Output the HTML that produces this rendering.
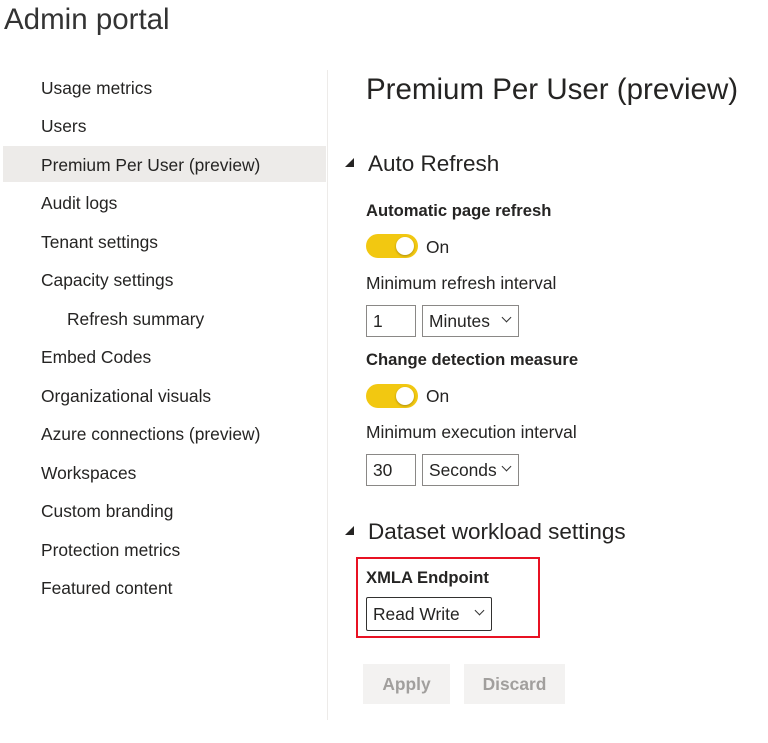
<!DOCTYPE html><html><head><style>
body{margin:0;width:768px;height:743px;background:#fff;font-family:"Liberation Sans",sans-serif;color:#252423;position:relative;overflow:hidden}
.a{position:absolute;white-space:nowrap}
.s{font-size:17.4px;left:41px;line-height:20px}
.t{position:absolute;width:52px;height:24px;border-radius:12px;background:#f2c811;left:366px}
.t:after{content:"";position:absolute;right:4px;top:3px;width:18px;height:18px;border-radius:50%;background:#fff;box-shadow:0 1px 2px rgba(0,0,0,.3)}
.b{position:absolute;border:1px solid #8a8886;height:32px;box-sizing:border-box;font-size:17.4px;line-height:30px;padding-left:6px}
.ch{position:absolute;right:8px;top:8px;width:6px;height:6px;border-right:1.5px solid #333;border-bottom:1.5px solid #333;transform:rotate(45deg)}
.tri{position:absolute;width:0;height:0;border-left:9px solid transparent;border-bottom:9px solid #252423;left:345px}
.btn{position:absolute;top:664px;height:40px;background:#f3f2f1;color:#a19f9d;font-weight:bold;font-size:17.4px;line-height:40px;text-align:center}
.lb{font-size:16.6px;font-weight:bold;left:366px}
</style></head><body>
<div class="a" style="left:4px;top:3px;font-size:29.5px;color:#333">Admin portal</div>
<div class="a" style="left:3px;top:146px;width:323px;height:36px;background:#edebe9"></div>
<div class="a" style="left:327px;top:70px;width:1px;height:650px;background:#edebe9"></div>
<div class="a s" style="top:78px">Usage metrics</div>
<div class="a s" style="top:116px">Users</div>
<div class="a s" style="top:155px">Premium Per User (preview)</div>
<div class="a s" style="top:193px">Audit logs</div>
<div class="a s" style="top:232px">Tenant settings</div>
<div class="a s" style="top:270px">Capacity settings</div>
<div class="a s" style="top:309px;left:67px">Refresh summary</div>
<div class="a s" style="top:347px">Embed Codes</div>
<div class="a s" style="top:386px">Organizational visuals</div>
<div class="a s" style="top:424px">Azure connections (preview)</div>
<div class="a s" style="top:463px">Workspaces</div>
<div class="a s" style="top:501px">Custom branding</div>
<div class="a s" style="top:540px">Protection metrics</div>
<div class="a s" style="top:578px">Featured content</div>
<div class="a" style="left:366px;top:73px;font-size:29.5px;color:#252423">Premium Per User (preview)</div>
<div class="tri" style="top:158px"></div>
<div class="a" style="left:368px;top:151px;font-size:22.5px">Auto Refresh</div>
<div class="a lb" style="top:201px">Automatic page refresh</div>
<div class="t" style="top:234px"></div><div class="a" style="left:426px;top:237px;font-size:17.4px">On</div>
<div class="a" style="left:366px;top:273px;font-size:17.4px">Minimum refresh interval</div>
<div class="b" style="left:366px;top:305px;width:50px">1</div>
<div class="b" style="left:422px;top:305px;width:97px">Minutes<span class="ch"></span></div>
<div class="a lb" style="top:350px">Change detection measure</div>
<div class="t" style="top:384px"></div><div class="a" style="left:426px;top:386px;font-size:17.4px">On</div>
<div class="a" style="left:366px;top:422px;font-size:17.4px">Minimum execution interval</div>
<div class="b" style="left:366px;top:454px;width:50px">30</div>
<div class="b" style="left:422px;top:454px;width:97px">Seconds<span class="ch"></span></div>
<div class="tri" style="top:526px"></div>
<div class="a" style="left:368px;top:519px;font-size:22.5px">Dataset workload settings</div>
<div class="a" style="left:356px;top:557px;width:184px;height:81px;border:2px solid #e81123;box-sizing:border-box"></div>
<div class="a lb" style="top:568px">XMLA Endpoint</div>
<div class="b" style="left:366px;top:597px;width:126px;height:34px;border:1.5px solid #323130;border-radius:2px;line-height:32px">Read Write<span class="ch" style="top:9px"></span></div>
<div class="btn" style="left:363px;width:87px">Apply</div>
<div class="btn" style="left:464px;width:101px">Discard</div>
</body></html>
